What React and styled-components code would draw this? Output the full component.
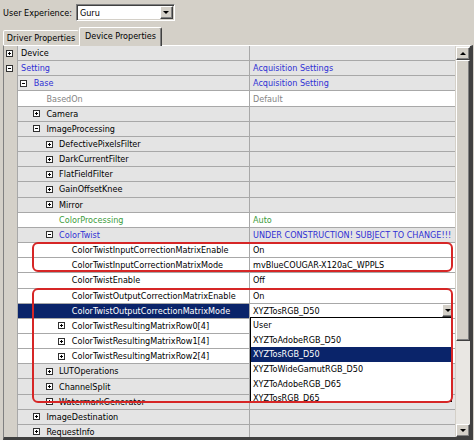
import React from "react";
import styled, { createGlobalStyle } from "styled-components";

const GlobalStyle = createGlobalStyle`
  html, body {
    margin: 0;
    padding: 0;
    background: #d4d0c8;
  }
  body {
    font-family: "DejaVu Sans Condensed", "Liberation Sans", sans-serif;
    font-size: 9px;
    color: #000;
  }
`;

const colors = {
  blue: "#3030d4",
  green: "#3c9c3c",
  gray: "#848484",
  black: "#000",
};

const Window = styled.div`
  position: relative;
  width: 474px;
  height: 440px;
  overflow: hidden;
  background: #d4d0c8;
`;

const TopBar = styled.div`
  height: 25px;
  display: flex;
  align-items: center;
  padding-left: 3px;
  gap: 4px;
`;

const Combo = styled.div`
  box-sizing: border-box;
  width: 99px;
  height: 17px;
  display: flex;
  align-items: center;
  background: #fff;
  border: 1px solid;
  border-color: #808080 #fff #fff #808080;
  box-shadow: inset 1px 1px #404040, inset -1px -1px #d4d0c8;
  padding: 0 1px 0 3px;
  span {
    flex: 1;
  }
`;

const ArrowButton = styled.div`
  box-sizing: border-box;
  width: ${(p) => p.$w || 13}px;
  height: ${(p) => p.$h || 13}px;
  display: flex;
  align-items: center;
  justify-content: center;
  background: #d4d0c8;
  border: 1px solid;
  border-color: #fff #404040 #404040 #fff;
  box-shadow: inset -1px -1px #808080;
  &::after {
    content: "";
    border-left: 3px solid transparent;
    border-right: 3px solid transparent;
    ${(p) => (p.$up ? "border-bottom: 3px solid #000;" : "border-top: 3px solid #000;")}
  }
`;

const TabStrip = styled.div`
  height: 20px;
  display: flex;
  align-items: flex-end;
  padding-left: 3px;
`;

const Tab = styled.div`
  box-sizing: border-box;
  width: ${(p) => p.$w}px;
  height: ${(p) => (p.$active ? 19 : 15)}px;
  display: flex;
  align-items: center;
  justify-content: center;
  padding-bottom: ${(p) => (p.$active ? 3 : 1)}px;
  border-top: 1px solid #fff;
  border-left: 1px solid #fff;
  border-right: 1px solid ${(p) => (p.$active ? "#404040" : "transparent")};
  box-shadow: ${(p) => (p.$active ? "inset -1px 0 #808080" : "none")};
  border-radius: 2px 2px 0 0;
  position: relative;
  z-index: ${(p) => (p.$active ? 1 : 0)};
  margin-bottom: ${(p) => (p.$active ? -1 : 0)}px;
  background: #d4d0c8;
`;

const Panel = styled.div`
  box-sizing: border-box;
  margin-left: 3px;
  width: 470px;
  height: 395px;
  border-top: 1px solid #fff;
  border-left: 1px solid #808080;
  border-right: 3px solid #404040;
  border-bottom: 3px solid #404040;
  display: flex;
`;

const List = styled.div`
  flex: 1;
  overflow: hidden;
`;

const Row = styled.div`
  display: grid;
  grid-template-columns: 14px 231px 1fr;
  height: 15.17px;
`;

const Gutter = styled.div`
  background: #d4d0c8;
  border-right: 1px solid #a8a8a8;
  display: flex;
  align-items: center;
  padding-left: 2px;
`;

const NameCell = styled.div`
  display: flex;
  align-items: center;
  white-space: nowrap;
  overflow: hidden;
  padding-left: ${(p) => (p.$level === 0 ? 3 : 12.7 * p.$level - 10.5)}px;
  background: ${(p) => (p.$selected ? "#0a246a" : p.$cat ? "#e4e4e4" : "#fff")};
  color: ${(p) => (p.$selected ? "#fff" : colors[p.$color || "black"])};
  border-bottom: 1px solid #a8a8a8;
`;

const ValueCell = styled.div`
  display: flex;
  align-items: center;
  white-space: nowrap;
  overflow: hidden;
  padding-left: 3px;
  background: ${(p) => (p.$cat ? "#e4e4e4" : "#fff")};
  color: ${(p) => colors[p.$color || "black"]};
  border-left: 1px solid #a8a8a8;
  border-bottom: 1px solid #a8a8a8;
  span {
    flex: 1;
  }
`;

const Slot = styled.div`
  width: 13.5px;
  flex: none;
  display: flex;
  align-items: center;
`;

const Scrollbar = styled.div`
  width: 15px;
  display: flex;
  flex-direction: column;
  padding-top: 1px;
  background: #e9e7e3;
  border-left: 1px solid #d4d0c8;
  box-sizing: border-box;
  align-items: center;
`;

const Thumb = styled.div`
  box-sizing: border-box;
  width: 14px;
  height: 281px;
  background: #d4d0c8;
  border: 1px solid;
  border-color: #fff #404040 #404040 #fff;
  box-shadow: inset -1px -1px #808080;
`;

const Track = styled.div`
  flex: 1;
`;

const Dropdown = styled.div`
  position: absolute;
  left: 250px;
  top: 317px;
  box-sizing: border-box;
  width: 202px;
  height: 85px;
  background: #fff;
  border: 1px solid #000;
  overflow: hidden;
`;

const Option = styled.div`
  height: 14.6px;
  display: flex;
  align-items: center;
  padding-left: 2px;
  background: ${(p) => (p.$selected ? "#0a246a" : "transparent")};
  color: ${(p) => (p.$selected ? "#fff" : "#000")};
`;

const Mark = styled.div`
  position: absolute;
  left: ${(p) => p.$x}px;
  top: ${(p) => p.$y}px;
  width: ${(p) => p.$w}px;
  height: ${(p) => p.$h}px;
  box-sizing: border-box;
  border: 2px solid #d62626;
  border-radius: 6px;
  pointer-events: none;
`;

const Expander = ({ open }) => (
  <svg width="7" height="7" viewBox="0 0 7 7">
    <rect x="0.5" y="0.5" width="6" height="6" fill="#fff" stroke="#303030" />
    <line x1="2" y1="3.5" x2="5" y2="3.5" stroke="#000" />
    {!open && <line x1="3.5" y1="2" x2="3.5" y2="5" stroke="#000" />}
  </svg>
);

const rows = [
  { name: "Device", level: 0, exp: "+", cat: true },
  { name: "Setting", level: 0, exp: "-", cat: true, color: "blue", value: "Acquisition Settings", vcolor: "blue" },
  { name: "Base", level: 1, exp: "-", cat: true, color: "blue", value: "Acquisition Setting", vcolor: "blue" },
  { name: "BasedOn", level: 2, color: "gray", value: "Default", vcolor: "gray" },
  { name: "Camera", level: 2, exp: "+", cat: true },
  { name: "ImageProcessing", level: 2, exp: "-", cat: true },
  { name: "DefectivePixelsFilter", level: 3, exp: "+", cat: true },
  { name: "DarkCurrentFilter", level: 3, exp: "+", cat: true },
  { name: "FlatFieldFilter", level: 3, exp: "+", cat: true },
  { name: "GainOffsetKnee", level: 3, exp: "+", cat: true },
  { name: "Mirror", level: 3, exp: "+", cat: true },
  { name: "ColorProcessing", level: 3, color: "green", value: "Auto", vcolor: "green" },
  { name: "ColorTwist", level: 3, exp: "-", cat: true, color: "blue", value: "UNDER CONSTRUCTION! SUBJECT TO CHANGE!!!", vcolor: "blue" },
  { name: "ColorTwistInputCorrectionMatrixEnable", level: 4, value: "On" },
  { name: "ColorTwistInputCorrectionMatrixMode", level: 4, value: "mvBlueCOUGAR-X120aC_WPPLS" },
  { name: "ColorTwistEnable", level: 4, value: "Off" },
  { name: "ColorTwistOutputCorrectionMatrixEnable", level: 4, value: "On" },
  { name: "ColorTwistOutputCorrectionMatrixMode", level: 4, value: "XYZTosRGB_D50", selected: true },
  { name: "ColorTwistResultingMatrixRow0[4]", level: 4, exp: "+" },
  { name: "ColorTwistResultingMatrixRow1[4]", level: 4, exp: "+" },
  { name: "ColorTwistResultingMatrixRow2[4]", level: 4, exp: "+" },
  { name: "LUTOperations", level: 3, exp: "+", cat: true },
  { name: "ChannelSplit", level: 3, exp: "+", cat: true },
  { name: "WatermarkGenerator", level: 3, exp: "+", cat: true },
  { name: "ImageDestination", level: 2, exp: "+", cat: true },
  { name: "RequestInfo", level: 2, exp: "+", cat: true },
];

const options = [
  "User",
  "XYZToAdobeRGB_D50",
  "XYZTosRGB_D50",
  "XYZToWideGamutRGB_D50",
  "XYZToAdobeRGB_D65",
  "XYZTosRGB_D65",
];

export default function App() {
  return (
    <Window>
      <GlobalStyle />
      <TopBar>
        <span>User Experience:</span>
        <Combo>
          <span>Guru</span>
          <ArrowButton $w={13} $h={13} />
        </Combo>
      </TopBar>
      <TabStrip>
        <Tab $w={76}>Driver Properties</Tab>
        <Tab $w={83} $active>
          Device Properties
        </Tab>
      </TabStrip>
      <Panel>
        <List>
          {rows.map((r) => (
            <Row key={r.name}>
              <Gutter>{r.level === 0 && <Expander open={r.exp === "-"} />}</Gutter>
              <NameCell $level={r.level} $cat={r.cat} $color={r.color} $selected={r.selected}>
                {r.level > 0 && <Slot>{r.exp && <Expander open={r.exp === "-"} />}</Slot>}
                {r.name}
              </NameCell>
              <ValueCell $cat={r.cat} $color={r.vcolor}>
                <span>{r.value}</span>
                {r.selected && <ArrowButton $w={11} $h={13} style={{ marginRight: 2 }} />}
              </ValueCell>
            </Row>
          ))}
        </List>
        <Scrollbar>
          <ArrowButton $w={14} $h={13} $up />
          <Thumb />
          <Track />
          <ArrowButton $w={14} $h={13} />
        </Scrollbar>
      </Panel>
      <Dropdown>
        {options.map((o) => (
          <Option key={o} $selected={o === "XYZTosRGB_D50"}>
            {o}
          </Option>
        ))}
      </Dropdown>
      <Mark $x={32} $y={242} $w={421} $h={30} />
      <Mark $x={32} $y={288} $w={421} $h={115} />
    </Window>
  );
}
